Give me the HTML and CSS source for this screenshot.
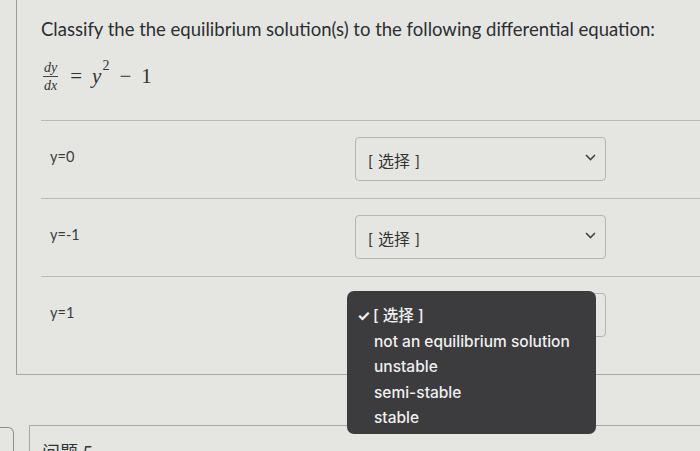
FILE: index.html
```html
<!DOCTYPE html>
<html>
<head>
<meta charset="utf-8"/>
<title>问题 4</title>
<link rel="stylesheet" href="styles.css">
</head>
<body>
<div class="quiz">
  <div class="card">
    <p class="prompt">Classify the the equilibrium solution(s) to the following differential equation:</p>
    <p class="equation">
      <span class="frac"><span class="num">dy</span><span class="den">dx</span></span>
      <span class="rel">=</span>
      <span class="var">y</span><sup>2</sup>
      <span class="rel">&minus;</span>
      <span class="one">1</span>
    </p>

    <div class="answers">
      <div class="answer">
        <div class="label">y=0</div>
        <div class="select"><span>[ 选择 ]</span><span class="chev"><svg width="11" height="7" viewBox="0 0 11 7"><path d="M1 1l4.5 4.5L10 1" fill="none" stroke="#444" stroke-width="1.6"/></svg></span></div>
      </div>
      <div class="answer">
        <div class="label">y=-1</div>
        <div class="select"><span>[ 选择 ]</span><span class="chev"><svg width="11" height="7" viewBox="0 0 11 7"><path d="M1 1l4.5 4.5L10 1" fill="none" stroke="#444" stroke-width="1.6"/></svg></span></div>
      </div>
      <div class="answer last">
        <div class="label">y=1</div>
        <div class="select open"><span class="current">[ 选择 ]</span><span class="chev"><svg width="11" height="7" viewBox="0 0 11 7"><path d="M1 1l4.5 4.5L10 1" fill="none" stroke="#444" stroke-width="1.6"/></svg></span>
          <ul class="menu">
            <li class="checked"><span class="tick">✓</span>[ 选择 ]</li>
            <li>not an equilibrium solution</li>
            <li>unstable</li>
            <li>semi-stable</li>
            <li>stable</li>
          </ul>
        </div>
      </div>
    </div>
  </div>

  <div class="next">
    <div class="tab"></div>
    <div class="card2"><span class="qtitle">问题 5</span></div>
  </div>
</div>
</body>
</html>
```

FILE: styles.css
```css
body {
  margin: 0;
  background-color: #e5e6e2;
  font-family: Lato, "Noto Sans CJK SC", sans-serif;
  color: #2d3338;
  overflow: hidden;
}

.quiz {
  width: 700px;
  height: 451px;
  position: relative;
}

.card {
  margin-left: 16px;
  height: 375px;
  border-left: 1px solid #9c9d9a;
  border-bottom: 1px solid #a7a8a5;
  box-sizing: border-box;
  padding: 17px 0 0 24px;
}

.prompt {
  margin: 0;
  font-size: 18.5px;
  line-height: 24px;
  color: #2b2f33;
}

.equation {
  margin: 17px 0 0 2px;
  height: 36px;
  display: flex;
  align-items: center;
  font-family: "Liberation Serif", "DejaVu Serif", serif;
  font-size: 21px;
  color: #333;
}

.frac {
  display: inline-flex;
  flex-direction: column;
  align-items: center;
  font-style: italic;
  font-size: 14px;
  line-height: 13px;
  margin-right: 2px;
}

.frac .num {
  border-bottom: 1px solid #444;
  padding: 0 1px 2px;
}

.frac .den {
  padding-top: 2px;
}

.rel {
  margin: 0 10px;
}

.var {
  font-style: italic;
}

sup {
  font-size: 14px;
  align-self: flex-start;
  margin-top: 0;
  margin-left: 1px;
}

.answers {
  margin-top: 26px;
}

.answer {
  height: 78px;
  border-top: 1px solid #b9bab7;
  display: flex;
  align-items: flex-start;
  padding-top: 16px;
  box-sizing: border-box;
}

.label {
  width: 305px;
  padding: 11px 0 0 9px;
  font-size: 14.5px;
  color: #3a3d40;
}

.select {
  position: relative;
  width: 251px;
  height: 44px;
  box-sizing: border-box;
  border: 1px solid #b4b5b2;
  border-radius: 4px;
  display: flex;
  align-items: center;
  justify-content: space-between;
  padding: 2px 9px 0 12px;
  font-size: 16px;
  word-spacing: 1px;
  color: #333;
}

.select.open .current {
  visibility: hidden;
}

.select .chev {
  display: flex;
  margin-top: -6px;
}

.menu {
  position: absolute;
  left: -9px;
  top: -3px;
  width: 249px;
  height: 143px;
  margin: 0;
  padding: 12px 0 0;
  list-style: none;
  background-color: #3c3b3d;
  border-radius: 7px;
  box-sizing: border-box;
  font-family: Inter, Roboto, "Noto Sans CJK SC", sans-serif;
  font-size: 15.5px;
  font-weight: 500;
  line-height: 25.5px;
  color: #f0f0f0;
  word-spacing: 0;
}

.menu li {
  padding-left: 27px;
  white-space: nowrap;
}

.menu .checked {
  padding-left: 10px;
}

.menu .tick {
  display: inline-block;
  width: 16px;
  font-size: 15px;
  font-weight: 700;
}

.next {
  display: flex;
  margin-top: 50px;
}

.tab {
  width: 13px;
  height: 30px;
  margin-top: 2px;
  border: 1px solid #8e8f8c;
  border-left: none;
  border-radius: 0 6px 0 0;
}

.card2 {
  margin-left: 15px;
  flex: 1;
  border-top: 1px solid #a8a9a6;
  border-left: 1px solid #a8a9a6;
  padding: 12px 0 0 12px;
}

.qtitle {
  font-size: 18px;
  color: #2d3338;
}
```
